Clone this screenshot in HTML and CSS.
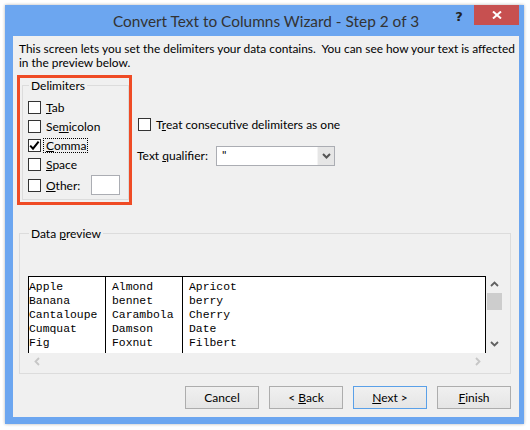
FILE: index.html
```html
<!DOCTYPE html>
<html lang="en">
<head>
  <meta charset="UTF-8">
  <title>Convert Text to Columns Wizard - Step 2 of 3</title>
  <link rel="stylesheet" href="styles.css">
</head>
<body>
  <div class="window">
    <div class="titlebar">
      <span></span>
      <span class="title">Convert Text to Columns Wizard - Step 2 of 3</span>
      <div class="caption-buttons">
        <span class="help">?</span>
        <span class="close">
          <svg width="10" height="8" viewBox="0 0 10 8"><path d="M1 0.5 L9 7.5 M9 0.5 L1 7.5" stroke="#fff" stroke-width="2"/></svg>
        </span>
      </div>
    </div>

    <div class="client">
      <p class="intro">This screen lets you set the delimiters your data contains.&nbsp; You can see how your text is affected<br>in the preview below.</p>

      <div class="options">
        <div class="highlight">
          <fieldset class="group delimiters">
            <legend>Delimiters</legend>
            <div class="check"><span class="box"></span><span><u>T</u>ab</span></div>
            <div class="check"><span class="box"></span><span>Se<u>m</u>icolon</span></div>
            <div class="check">
              <span class="box">
                <svg width="11" height="11" viewBox="0 0 11 11"><path d="M1.2 5.6 L4 8.6 L9.6 1.6" fill="none" stroke="#000" stroke-width="2"/></svg>
              </span>
              <span class="focus"><u>C</u>omma</span>
            </div>
            <div class="check"><span class="box"></span><span><u>S</u>pace</span></div>
            <div class="check other"><span class="box"></span><span><u>O</u>ther:</span><span class="textbox"></span></div>
          </fieldset>
        </div>

        <div class="side">
          <div class="check treat"><span class="box"></span><span>T<u>r</u>eat consecutive delimiters as one</span></div>
          <div class="qualifier">
            <span class="qualifier-label">Text <u>q</u>ualifier:</span>
            <div class="combo">
              <span class="combo-value">"</span>
              <span class="combo-drop">
                <svg width="9" height="6" viewBox="0 0 9 6"><path d="M1 1 L4.5 4.5 L8 1" fill="none" stroke="#555" stroke-width="2"/></svg>
              </span>
            </div>
          </div>
        </div>
      </div>

      <fieldset class="group preview">
        <legend>Data <u>p</u>review</legend>
        <div class="preview-box">
          <div class="sheet">
            <div class="col col1">Apple
Banana
Cantaloupe
Cumquat
Fig</div>
            <div class="col col2">Almond
bennet
Carambola
Damson
Foxnut</div>
            <div class="col col3">Apricot
berry
Cherry
Date
Filbert</div>
          </div>
          <div class="vscroll">
            <span class="arrow">
              <svg width="9" height="6" viewBox="0 0 9 6"><path d="M1 5 L4.5 1.5 L8 5" fill="none" stroke="#606060" stroke-width="1.8"/></svg>
            </span>
            <span class="thumb"></span>
            <span class="spacer"></span>
            <span class="arrow">
              <svg width="9" height="6" viewBox="0 0 9 6"><path d="M1 1 L4.5 4.5 L8 1" fill="none" stroke="#606060" stroke-width="1.8"/></svg>
            </span>
          </div>
          <div class="hscroll">
            <span class="arrow">
              <svg width="6" height="9" viewBox="0 0 6 9"><path d="M5 1 L1.5 4.5 L5 8" fill="none" stroke="#c6c6c6" stroke-width="1.8"/></svg>
            </span>
            <span class="arrow">
              <svg width="6" height="9" viewBox="0 0 6 9"><path d="M1 1 L4.5 4.5 L1 8" fill="none" stroke="#c6c6c6" stroke-width="1.8"/></svg>
            </span>
          </div>
          <div class="corner"></div>
        </div>
      </fieldset>

      <div class="buttons">
        <button>Cancel</button>
        <button>&lt; <u>B</u>ack</button>
        <button class="default"><u>N</u>ext &gt;</button>
        <button><u>F</u>inish</button>
      </div>
    </div>
  </div>
</body>
</html>
```

FILE: styles.css
```css
body {
  margin: 0;
  background: #fff;
  font-family: Lato, "Noto Sans", sans-serif;
  font-size: 12px;
  color: #000;
}

/* window frame */
.window {
  margin: 5px;
  width: 519px;
  height: 419px;
  box-sizing: border-box;
  padding: 0 5px 7px 8px;
  background: #6ca6f0;
  box-shadow: 0 0 3px rgba(0, 0, 0, 0.3);
  display: flex;
  flex-direction: column;
}
.titlebar {
  height: 31px;
  flex: none;
  display: grid;
  grid-template-columns: 1fr auto 1fr;
}
.title {
  font-size: 15.4px;
  line-height: 32px;
  color: #333;
  white-space: nowrap;
}
.caption-buttons {
  display: flex;
  justify-content: flex-end;
  align-items: flex-start;
}
.help {
  width: 28px;
  height: 20px;
  text-align: center;
  font-family: "DejaVu Sans", sans-serif;
  font-weight: bold;
  font-size: 13px;
  line-height: 24px;
  color: #222;
  margin-right: 1px;
}
.close {
  width: 45px;
  height: 20px;
  background: #c75050;
  display: flex;
  justify-content: center;
  align-items: center;
}

.client {
  flex: 1;
  background: #f0f0f0;
}
.intro {
  margin: 6px 0 0 6px;
  font-size: 11.9px;
  line-height: 14.3px;
  white-space: nowrap;
}

/* delimiter options */
.options {
  display: flex;
  margin-top: 4px;
}
.highlight {
  margin-left: 4px;
  width: 115px;
  height: 130px;
  box-sizing: border-box;
  border: 3px solid #ef4b25;
  padding: 1px 0 0 2px;
}
.group {
  margin: 0;
  border: 1px solid #dcdcdc;
  min-width: 0;
}
.group legend {
  padding: 0 2px;
  margin-left: 1px;
  line-height: 14px;
}
.delimiters {
  width: 107px;
  box-sizing: border-box;
  padding: 5px 8px 2px 5px;
}
.check {
  display: flex;
  align-items: center;
  gap: 5px;
  height: 19px;
  white-space: nowrap;
}
.check.other {
  height: 23px;
}
.box {
  width: 13px;
  height: 13px;
  box-sizing: border-box;
  border: 1px solid #333;
  background: #fff;
  flex: none;
  display: flex;
  justify-content: center;
  align-items: center;
}
.focus {
  border: 1px dotted #000;
  padding: 0 1px 0 2px;
  margin-left: -3px;
  line-height: 13px;
}
.textbox {
  margin-left: auto;
  width: 29px;
  height: 20px;
  box-sizing: border-box;
  border: 1px solid #abadb3;
  background: #fff;
}

.side {
  margin-left: 6px;
}
.treat {
  margin-top: 40px;
}
.qualifier {
  display: flex;
  align-items: center;
  height: 20px;
  margin-top: 12px;
  margin-left: -1px;
}
.qualifier-label {
  width: 79px;
}
.combo {
  width: 119px;
  height: 20px;
  box-sizing: border-box;
  border: 1px solid #abadb3;
  background: #fff;
  display: flex;
}
.combo-value {
  flex: 1;
  padding-left: 5px;
  line-height: 16px;
}
.combo-drop {
  width: 16px;
  background: #e6e6e6;
  border-left: 1px solid #f4f4f4;
  display: flex;
  justify-content: center;
  align-items: center;
}

/* data preview */
.preview {
  width: 492px;
  box-sizing: border-box;
  margin: 22px 0 0 6px;
  padding: 35px 0 3px 8px;
}
.preview-box {
  display: grid;
  grid-template-columns: 458px 17px;
  grid-template-rows: 77px 17px;
}
.sheet {
  background: #fff;
  border: 1px solid #000;
  border-bottom: none;
  display: flex;
  overflow: hidden;
  font-family: "Liberation Mono", monospace;
  font-size: 11.4px;
  line-height: 14.2px;
}
.col {
  white-space: pre;
  padding-top: 3px;
}
.col1 {
  width: 76px;
  border-right: 1px solid #000;
}
.col2 {
  width: 70px;
  padding-left: 6px;
  border-right: 1px solid #000;
}
.col3 {
  padding-left: 6px;
}
.vscroll {
  display: flex;
  flex-direction: column;
  align-items: center;
}
.vscroll .arrow {
  height: 17px;
  display: flex;
  align-items: center;
  justify-content: center;
}
.thumb {
  width: 15px;
  height: 17px;
  background: #cdcdcd;
}
.spacer {
  flex: 1;
}
.hscroll {
  display: flex;
  justify-content: space-between;
}
.hscroll .arrow {
  width: 17px;
  display: flex;
  align-items: center;
  justify-content: center;
}

/* dialog buttons */
.buttons {
  display: flex;
  justify-content: flex-end;
  gap: 10px;
  margin-top: 12px;
  padding-right: 8px;
}
button {
  width: 74px;
  height: 23px;
  border: 1px solid #adadad;
  background: linear-gradient(#f0f0f0, #e5e5e5);
  font-family: Lato, "Noto Sans", sans-serif;
  font-size: 12px;
  color: #000;
  padding: 0;
}
button.default {
  border-color: #5aa0e8;
}
```
